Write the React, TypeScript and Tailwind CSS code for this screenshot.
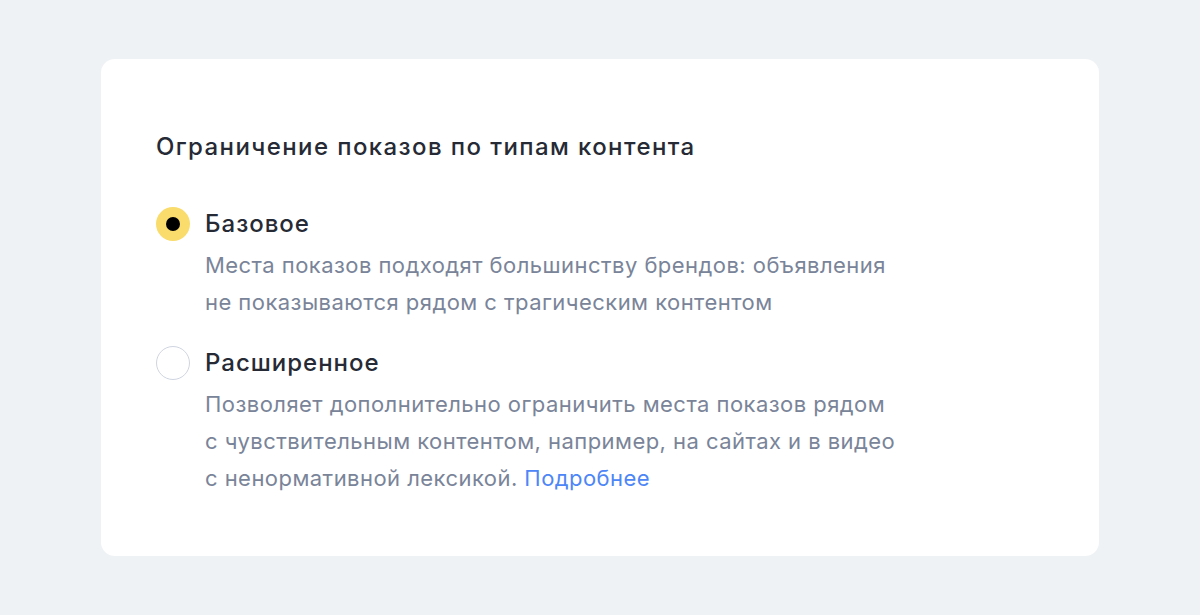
import React from "react";

function Radio({ checked }: { checked: boolean }) {
  return checked ? (
    <span className="flex h-[34px] w-[34px] shrink-0 items-center justify-center rounded-full bg-[#f9dc6c]">
      <span className="h-[14px] w-[14px] rounded-full bg-black" />
    </span>
  ) : (
    <span className="h-[34px] w-[34px] shrink-0 rounded-full border-[1.5px] border-[#cfd5e0] bg-white" />
  );
}

function Option({
  checked,
  label,
  children,
  className,
}: {
  checked: boolean;
  label: string;
  children: React.ReactNode;
  className?: string;
}) {
  return (
    <div className={"flex flex-col " + (className ?? "")}>
      <div className="flex items-center gap-[15px]">
        <Radio checked={checked} />
        <span className="text-[24px] leading-[34px] font-medium tracking-[1px] text-[#262a35]">{label}</span>
      </div>
      <p className="mt-[6px] pl-[49px] text-[22px] leading-[37px] tracking-[0.45px] text-[#7a8499]">{children}</p>
    </div>
  );
}

export default function App() {
  return (
    <div
      className="h-[615px] w-[1200px] bg-[#eff2f5] px-[101px] pt-[59px]"
      style={{ fontFamily: "Inter, 'Noto Sans', sans-serif" }}
    >
      <div className="flex h-[497px] flex-col rounded-[14px] bg-white px-[55px] pt-[73px]">
        <h2 className="text-[24px] leading-[30px] font-medium tracking-[1.4px] text-[#262a35]">
          Ограничение показов по типам контента
        </h2>
        <Option checked label="Базовое" className="mt-[45px]">
          Места показов подходят большинству брендов: объявления
          <br />
          не показываются рядом с трагическим контентом
        </Option>
        <Option checked={false} label="Расширенное" className="mt-[25px]">
          Позволяет дополнительно ограничить места показов рядом
          <br />
          с чувствительным контентом, например, на сайтах и в видео
          <br />
          с ненормативной лексикой. <a className="text-[#4d86f6]">Подробнее</a>
        </Option>
      </div>
    </div>
  );
}
